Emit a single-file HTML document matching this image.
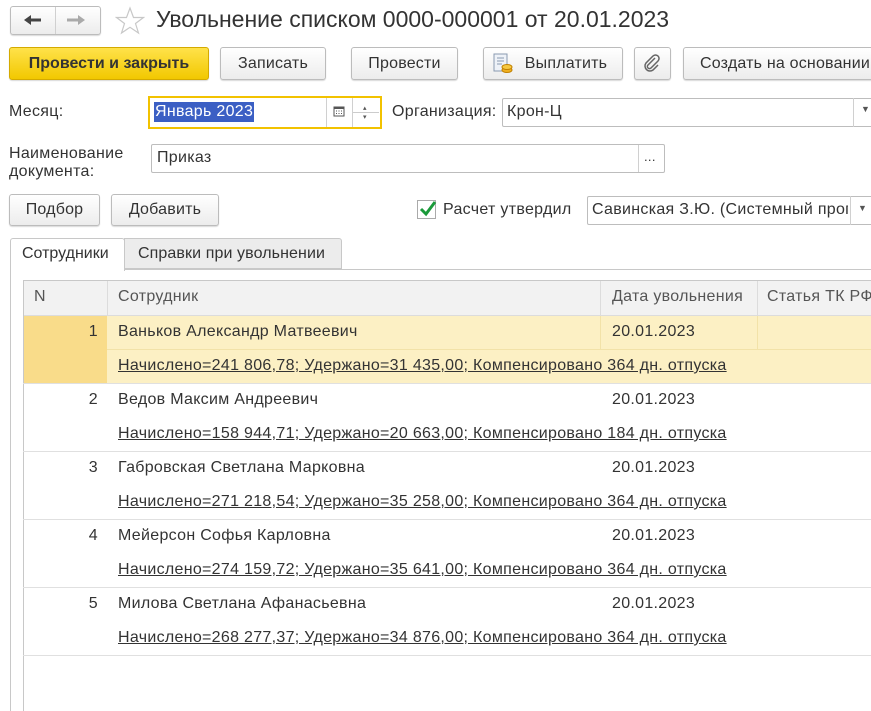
<!DOCTYPE html>
<html><head><meta charset="utf-8"><style>
*{box-sizing:border-box;margin:0;padding:0}
body{width:871px;height:711px;overflow:hidden;background:#fff;font-family:"Liberation Sans",sans-serif;font-size:16px;letter-spacing:.3px;color:#333;position:relative}
.a{position:absolute}
.btn{position:absolute;border:1px solid #bcbcbc;border-radius:3px;background:linear-gradient(#fff,#ececec);box-shadow:0 1px 1px rgba(0,0,0,.15);text-align:center;color:#333;font-size:16px;letter-spacing:.2px}
.inp{position:absolute;border:1px solid #bdbdbd;background:#fff;border-radius:2px}
.u{text-decoration:underline;color:#333}
.hl{position:absolute;left:23px;right:0;height:1px;background:#e0e0e0}
.r{margin-top:1px}
</style></head><body>
<!-- nav -->
<div class="btn" style="left:10px;top:6px;width:91px;height:29px"></div>
<div class="a" style="left:55px;top:7px;width:1px;height:27px;background:#d0d0d0"></div>
<svg class="a" style="left:23px;top:13px" width="20" height="14"><path d="M3 7H18" stroke="#444" stroke-width="3"/><path d="M1 7L8 2V12Z" fill="#444"/></svg>
<svg class="a" style="left:66px;top:13px" width="20" height="14"><path d="M1 7H16" stroke="#aaa" stroke-width="3"/><path d="M19 7L12 2V12Z" fill="#aaa"/></svg>
<svg class="a" style="left:115px;top:6px" width="30" height="30"><path d="M15 2L18.5 11.5H28.5L20.5 17.5L23.5 27L15 21.3L6.5 27L9.5 17.5L1.5 11.5H11.5Z" fill="none" stroke="#c8c8c8" stroke-width="1.2"/></svg>
<div class="a" style="left:156px;top:6px;font-size:23px;letter-spacing:0;color:#333">Увольнение списком 0000-000001 от 20.01.2023</div>
<!-- toolbar -->
<div class="btn" style="left:9px;top:47px;width:200px;height:33px;background:linear-gradient(#ffe24a,#f2c800);border-color:#d4aa00;font-weight:bold;line-height:31px;letter-spacing:0">Провести и закрыть</div>
<div class="btn" style="left:220px;top:47px;width:106px;height:33px;line-height:31px">Записать</div>
<div class="btn" style="left:351px;top:47px;width:107px;height:33px;line-height:31px">Провести</div>
<div class="btn" style="left:483px;top:47px;width:140px;height:33px;line-height:31px;padding-left:26px">Выплатить</div>
<svg class="a" style="left:492px;top:53px" width="22" height="22"><rect x="2" y="1" width="13" height="17" fill="#eef2f8" stroke="#8a9ab0"/><path d="M5 5h7M5 8h7M5 11h5" stroke="#8a9ab0"/><ellipse cx="15" cy="17" rx="5" ry="2.5" fill="#f0b020" stroke="#c08000"/><ellipse cx="15" cy="14" rx="5" ry="2.5" fill="#f6c840" stroke="#c08000"/></svg>
<div class="btn" style="left:634px;top:47px;width:37px;height:33px"></div>
<svg class="a" style="left:643px;top:54px" width="18" height="18"><path d="M12 4L5 11a2 2 0 0 0 3 3l7-7a3.5 3.5 0 0 0-5-5L3 9a5 5 0 0 0 7 7l5-5" fill="none" stroke="#666" stroke-width="1.5"/></svg>
<div class="btn" style="left:683px;top:47px;width:200px;height:33px;line-height:31px;text-align:left;padding-left:16px;white-space:nowrap;overflow:hidden">Создать на основании</div>
<!-- Месяц -->
<div class="a" style="left:9px;top:103px">Месяц:</div>
<div class="a" style="left:148px;top:96px;width:234px;height:33px;border:2px solid #f2c200;background:#fff"></div>
<div class="a" style="left:154px;top:102px;background:#3b5fc4;color:#fff;padding:0 1px;height:20px;line-height:20px">Январь 2023</div>
<div class="a" style="left:326px;top:98px;width:1px;height:29px;background:#d0d0d0"></div>
<div class="a" style="left:352px;top:98px;width:1px;height:29px;background:#d0d0d0"></div>
<svg class="a" style="left:333px;top:105px" width="12" height="12"><rect x="1" y="2" width="10" height="9" fill="none" stroke="#555"/><rect x="1" y="2" width="10" height="2" fill="#555"/><path d="M3 6h1M5.5 6h1M8 6h1M3 8.5h1M5.5 8.5h1M8 8.5h1" stroke="#555"/></svg>
<div class="a" style="left:353px;top:112px;width:26px;height:1px;background:#ccc"></div>
<div class="a" style="left:363px;top:104px;font-size:7px;color:#555">▴</div>
<div class="a" style="left:363px;top:113px;font-size:7px;color:#555">▾</div>
<div class="a" style="left:392px;top:103px">Организация:</div>
<div class="inp" style="left:502px;top:98px;width:380px;height:29px"></div>
<div class="a" style="left:507px;top:103px">Крон-Ц</div>
<div class="a" style="left:853px;top:98px;width:1px;height:29px;background:#d0d0d0"></div>
<div class="a" style="left:861px;top:104px;font-size:9px;color:#555">▼</div>
<!-- Наименование -->
<div class="a" style="left:9px;top:145px;line-height:18px">Наименование<br>документа:</div>
<div class="inp" style="left:151px;top:144px;width:514px;height:29px"></div>
<div class="a" style="left:157px;top:149px">Приказ</div>
<div class="a" style="left:638px;top:145px;width:1px;height:27px;background:#d0d0d0"></div>
<div class="a" style="left:644px;top:149px;font-size:13px">...</div>
<!-- buttons row -->
<div class="btn" style="left:9px;top:194px;width:91px;height:32px;line-height:30px">Подбор</div>
<div class="btn" style="left:111px;top:194px;width:108px;height:32px;line-height:30px">Добавить</div>
<div class="a" style="left:417px;top:200px;width:19px;height:19px;border:1px solid #aaa;background:#fff"></div>
<svg class="a" style="left:418px;top:199px" width="20" height="20"><path d="M3 10L8 15L17 3" fill="none" stroke="#1a9a3a" stroke-width="3"/></svg>
<div class="a" style="left:443px;top:201px">Расчет утвердил</div>
<div class="inp" style="left:587px;top:196px;width:295px;height:29px"></div>
<div class="a" style="left:592px;top:201px;white-space:nowrap;width:256px;overflow:hidden;color:#333">Савинская З.Ю. (Системный программист)</div>
<div class="a" style="left:850px;top:196px;width:1px;height:29px;background:#d0d0d0"></div>
<div class="a" style="left:858px;top:203px;font-size:9px;color:#555">▼</div>
<!-- tabs -->
<div class="a" style="left:10px;top:269px;right:0;height:1px;background:#c8c8c8"></div>
<div class="a" style="left:10px;top:269px;width:1px;height:442px;background:#c8c8c8"></div>
<div class="a" style="left:10px;top:238px;width:115px;height:33px;border:1px solid #c8c8c8;border-bottom:none;background:#fff;border-radius:3px 3px 0 0;padding:6px 0 0 11px;letter-spacing:0">Сотрудники</div>
<div class="a" style="left:124px;top:238px;width:218px;height:31px;border:1px solid #c8c8c8;background:#ececec;border-radius:0 3px 0 0;padding:6px 0 0 13px;letter-spacing:.1px">Справки при увольнении</div>
<!-- table -->
<div class="a" style="left:23px;top:280px;width:1px;height:431px;background:#c8c8c8"></div>
<div class="a" style="left:23px;top:280px;right:0;height:1px;background:#c8c8c8"></div>
<div class="a" style="left:24px;top:281px;right:0;height:35px;background:#f2f2f2;border-bottom:1px solid #dcdcdc"></div>
<div class="a" style="left:107px;top:281px;width:1px;height:35px;background:#dcdcdc"></div>
<div class="a" style="left:600px;top:281px;width:1px;height:35px;background:#dcdcdc"></div>
<div class="a" style="left:757px;top:281px;width:1px;height:35px;background:#dcdcdc"></div>
<div class="a" style="left:34px;top:288px;color:#555">N</div>
<div class="a" style="left:118px;top:288px;color:#555">Сотрудник</div>
<div class="a" style="left:612px;top:288px;color:#555">Дата увольнения</div>
<div class="a" style="left:767px;top:288px;color:#555;white-space:nowrap">Статья ТК РФ</div>
<!-- row1 highlight -->
<div class="a" style="left:24px;top:316px;right:0;height:67px;background:#fcf0c4"></div>
<div class="a" style="left:24px;top:316px;width:83px;height:67px;background:#f9dc8a"></div>
<div class="a" style="left:107px;top:349px;right:0;height:1px;background:#f2e2a8"></div>
<div class="a" style="left:600px;top:316px;width:1px;height:33px;background:#f2e2a8"></div>
<div class="a" style="left:757px;top:316px;width:1px;height:33px;background:#f2e2a8"></div>
<div class="hl" style="top:383px"></div>
<div class="hl" style="top:451px"></div>
<div class="hl" style="top:519px"></div>
<div class="hl" style="top:587px"></div>
<div class="hl" style="top:655px"></div>

<div class="a" style="left:24px;top:323px;width:74px;text-align:right">1</div>
<div class="a" style="left:118px;top:323px">Ваньков Александр Матвеевич</div>
<div class="a" style="left:612px;top:323px">20.01.2023</div>
<div class="a u" style="left:118px;top:357px">Начислено=241 806,78; Удержано=31 435,00; Компенсировано 364 дн. отпуска</div>

<div class="a" style="left:24px;top:391px;width:74px;text-align:right">2</div>
<div class="a" style="left:118px;top:391px">Ведов Максим Андреевич</div>
<div class="a" style="left:612px;top:391px">20.01.2023</div>
<div class="a u" style="left:118px;top:425px">Начислено=158 944,71; Удержано=20 663,00; Компенсировано 184 дн. отпуска</div>

<div class="a" style="left:24px;top:459px;width:74px;text-align:right">3</div>
<div class="a" style="left:118px;top:459px">Габровская Светлана Марковна</div>
<div class="a" style="left:612px;top:459px">20.01.2023</div>
<div class="a u" style="left:118px;top:493px">Начислено=271 218,54; Удержано=35 258,00; Компенсировано 364 дн. отпуска</div>

<div class="a" style="left:24px;top:527px;width:74px;text-align:right">4</div>
<div class="a" style="left:118px;top:527px">Мейерсон Софья Карловна</div>
<div class="a" style="left:612px;top:527px">20.01.2023</div>
<div class="a u" style="left:118px;top:561px">Начислено=274 159,72; Удержано=35 641,00; Компенсировано 364 дн. отпуска</div>

<div class="a" style="left:24px;top:595px;width:74px;text-align:right">5</div>
<div class="a" style="left:118px;top:595px">Милова Светлана Афанасьевна</div>
<div class="a" style="left:612px;top:595px">20.01.2023</div>
<div class="a u" style="left:118px;top:629px">Начислено=268 277,37; Удержано=34 876,00; Компенсировано 364 дн. отпуска</div>
</body></html>
